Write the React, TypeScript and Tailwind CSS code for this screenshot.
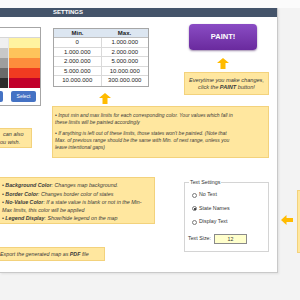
import React from 'react'

const swatches = [
  ['bg-[#f0f0f0]', 'bg-[#fff3a0]'],
  ['bg-[#c8c8c8]', 'bg-[#fec35b]'],
  ['bg-[#9e9e9e]', 'bg-[#fd8d3c]'],
  ['bg-[#6a6a6a]', 'bg-[#f03b20]'],
  ['bg-[#2b2b2b]', 'bg-[#c1002a]'],
]

const ranges = [
  ['0', '1.000.000'],
  ['1.000.000', '2.000.000'],
  ['2.000.000', '5.000.000'],
  ['5.000.000', '10.000.000'],
  ['10.000.000', '300.000.000'],
]

const UpArrow = () => (
  <svg width="12" height="11" viewBox="0 0 12 11">
    <polygon points="6,0 12,5 8.5,5 8.5,11 3.5,11 3.5,5 0,5" fill="#ffbb00" />
  </svg>
)

const LeftArrow = () => (
  <svg width="12" height="10" viewBox="0 0 12 10">
    <polygon points="0,5 5.5,0 5.5,3 12,3 12,7 5.5,7 5.5,10" fill="#ffbb00" />
  </svg>
)

const Radio = ({ on }: { on?: boolean }) => (
  <span className="w-[5px] h-[5px] rounded-full border border-[#7a7a7a] bg-white flex items-center justify-center">
    {on && <span className="w-[2px] h-[2px] rounded-full bg-[#111]" />}
  </span>
)

export default function App() {
  return (
    <div className="w-[300px] h-[300px] overflow-hidden bg-[#f3f3f3] font-['Liberation_Sans',sans-serif] text-[#333]">
      <div className="h-[8px] bg-[#fbfbfb]" />
      <div className="flex">
        <div className="shrink-0 w-[278px] h-[265px] bg-white border-r border-b border-[#c9c9c9] shadow-[1px_1px_2px_rgba(0,0,0,0.08)] flex flex-col">
          <div className="h-[9px] bg-[#44546a] text-white font-bold text-[6px] leading-[9px] pl-[53px]">SETTINGS</div>

          {/* top row */}
          <div className="h-[89px] flex items-start">
            <div className="w-[41px] mt-[10px] border-t border-r border-b border-[#a6a6a6]">
              <div className="h-[10px] bg-white border-b border-[#d6d6d6]" />
              {swatches.map(([g, c], i) => (
                <div key={i} className="flex h-[10px]">
                  <div className={`w-[8px] ${g}`} />
                  <div className="w-px bg-[#e6e6e6]" />
                  <div className={`flex-1 ${c}`} />
                </div>
              ))}
              <div className="h-[17px] flex items-center">
                <div className="w-[3px] h-[11px] bg-[#4472c4] rounded-r-[2px]" />
                <div className="ml-[8px] w-[25px] h-[11px] bg-[#4472c4] rounded-[2px] text-white text-[5px] leading-[11px] text-center">Select</div>
              </div>
            </div>

            <div className="ml-[12px] w-[96px] mt-[11px] flex flex-col items-center">
              <div className="w-full border border-[#a6a6a6] text-[6px] text-[#222]">
                <div className="flex h-[9px] bg-[#dce6f1] font-bold leading-[9px] border-b border-[#bfbfbf]">
                  <div className="flex-1 text-center">Min.</div>
                  <div className="flex-1 text-center">Max.</div>
                </div>
                {ranges.map(([a, b], i) => (
                  <div key={i} className="flex h-[9.6px] leading-[9.6px] border-b last:border-b-0 border-[#d9d9d9]">
                    <div className="flex-1 text-center border-r border-[#d9d9d9]">{a}</div>
                    <div className="flex-1 text-center">{b}</div>
                  </div>
                ))}
              </div>
              <div className="mt-[6px] ml-[7px]">
                <UpArrow />
              </div>
            </div>

            <div className="ml-[35px] w-[85px] flex flex-col items-center">
              <div className="mt-[7px] ml-[-7px] w-[68px] h-[26px] rounded-[4px] bg-gradient-to-b from-[#8a4cc4] to-[#6a2a9e] shadow-[0_1px_2px_rgba(60,20,90,0.5)] text-white font-bold text-[7.5px] flex items-center justify-center">
                PAINT!
              </div>
              <div className="mt-[8px] ml-[-7px]">
                <UpArrow />
              </div>
              <div className="mt-[3px] w-[85px] h-[23px] bg-[#ffe79f] border border-[#f3d27c] italic text-[5.6px] leading-[7px] text-center text-[#3a3a3a] pt-[4px]">
                <div>Everytime you make changes,</div>
                <div>
                  click the <b>PAINT</b> button!
                </div>
              </div>
            </div>
          </div>

          {/* middle row */}
          <div className="h-[71px] flex items-start">
            <div className="mt-[22px] w-[32px] h-[20px] bg-[#ffe79f] border border-l-0 border-[#f3d27c] italic text-[5.5px] leading-[7.5px] text-[#3a3a3a] pt-[2px] overflow-hidden whitespace-nowrap">
              <div className="pl-[3px]">can also</div>
              <div>ou wish.</div>
            </div>
            <div className="ml-[20px] w-[217px] h-[52px] bg-[#ffe79f] border border-[#f3d27c] italic text-[5px] leading-[7px] text-[#3a3a3a] pt-[5px] pl-[2px] whitespace-nowrap">
              <div>• Input min and max limits for each corresponding color. Your values which fall in</div>
              <div>these limits will be painted accordingly</div>
              <div className="mt-[4px]">• If anything is left out of these limits, those states won't be painted. (Note that</div>
              <div>Max. of previous range should be the same with Min. of next range, unless you</div>
              <div>leave intentional gaps)</div>
            </div>
          </div>

          {/* bottom row */}
          <div className="flex items-start">
            <div className="flex flex-col">
              <div className="w-[155px] h-[47px] bg-[#ffe79f] border border-l-0 border-[#f3d27c] italic text-[5.3px] leading-[8.5px] text-[#3a3a3a] pt-[3px] pl-[2px] whitespace-nowrap">
                <div>• <b>Background Color</b>: Changes map background.</div>
                <div>• <b>Border Color</b>: Changes border color of states</div>
                <div className="leading-[8px]">• <b>No-Value Color</b>: If a state value is blank or not in the Min-</div>
                <div className="leading-[8px]">Max limits, this color will be applied</div>
                <div>• <b>Legend Display</b>: Show/hide legend on the map</div>
              </div>
              <div className="mt-[23px] w-[105px] h-[14px] bg-[#ffe79f] border border-l-0 border-[#f3d27c] italic text-[5.3px] leading-[12px] text-[#3a3a3a] whitespace-nowrap">
                Export the generated map as <b>PDF</b> file
              </div>
            </div>
            <div className="ml-[29px] mt-[5px] w-[85px] h-[70px] border border-[#d4d4d4] relative text-[5.3px] text-[#333]">
              <div className="absolute top-[-4px] left-[4px] bg-white px-[1px] leading-[7px]">Text Settings</div>
              <div className="mt-[9px] ml-[7px] flex flex-col gap-[7.5px]">
                <div className="flex items-center gap-[2px] h-[6px]">
                  <Radio />
                  <span>No Text</span>
                </div>
                <div className="flex items-center gap-[2px] h-[6px]">
                  <Radio on />
                  <span>State Names</span>
                </div>
                <div className="flex items-center gap-[2px] h-[6px]">
                  <Radio />
                  <span>Display Text</span>
                </div>
              </div>
              <div className="mt-[9px] ml-[3px] flex items-center gap-[3px]">
                <span>Text Size:</span>
                <div className="w-[33px] h-[10px] bg-[#ffffcc] border border-[#8a8a8a] text-center leading-[8px]">12</div>
              </div>
            </div>
          </div>
        </div>

        <div className="shrink-0 flex items-start">
          <div className="shrink-0 ml-[3px] mt-[207px]">
            <LeftArrow />
          </div>
          <div className="shrink-0 ml-[4px] mt-[182px] w-[20px] h-[63px] bg-[#ffe79f] border border-[#f3d27c]" />
        </div>
      </div>
    </div>
  )
}
